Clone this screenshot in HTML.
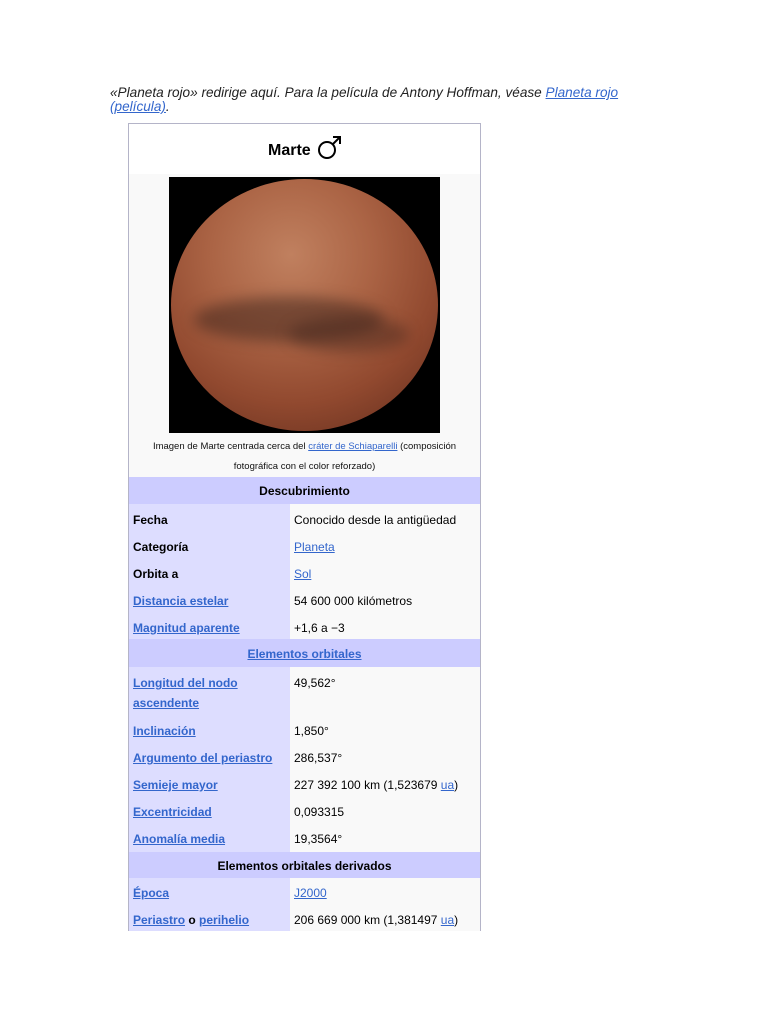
<!DOCTYPE html>
<html><head><meta charset="utf-8">
<style>
*{margin:0;padding:0;box-sizing:border-box}
body{width:768px;height:1024px;background:#fff;font-family:"Liberation Sans",Arial,sans-serif;color:#000;position:relative;overflow:hidden}
a{color:#3366cc;text-decoration:underline}
.note{position:absolute;left:110px;top:86px;width:530px;font-size:13.6px;font-style:italic;line-height:14px;color:#222}
.tbl{position:absolute;left:128px;top:123px;width:353px;height:830px;border:1px solid #b4b4c8;border-bottom:none;background:#f9f9f9}
.abs{position:absolute}
.title{left:0;top:0;width:351px;height:50px;background:#fff}
.cap{left:0;top:313px;width:351px;text-align:center;font-size:9.5px;line-height:20px;color:#111}
.hd{left:0;width:351px;background:#ccccff;text-align:center;font-weight:bold;font-size:12px}
.lc{left:0;width:161px;background:#ddddff}
.l{left:4px;font-size:12px;font-weight:bold;line-height:20px}
.r{left:165px;font-size:12px;line-height:20px}
</style></head><body>
<div class="note">«Planeta rojo» redirige aquí. Para la película de Antony Hoffman, véase <a>Planeta rojo (película)</a>.</div>
<div class="tbl">
 <div class="abs title">
  <div class="abs" style="left:139px;top:18px;font-weight:bold;font-size:16px;line-height:18px">Marte</div>
  <svg class="abs" style="left:188px;top:11px" width="26" height="26" viewBox="0 0 26 26"><circle cx="10" cy="15" r="8" fill="none" stroke="#000" stroke-width="2"/><path d="M16 9 L23 2 M16 2 H23 V9" fill="none" stroke="#000" stroke-width="2"/></svg>
 </div>
 <div class="abs" style="left:40px;top:53px;width:271px;height:256px;background:#000;overflow:hidden">
  <div style="position:absolute;left:2px;top:2px;width:267px;height:252px;border-radius:50%;background:radial-gradient(circle at 45% 30%,#c0805f 0%,#ab6445 35%,#91492f 65%,#703522 88%,#4e2418 100%)"></div>
  <div style="position:absolute;left:25px;top:120px;width:190px;height:45px;border-radius:50%;background:rgba(60,35,28,0.5);filter:blur(7px)"></div>
  <div style="position:absolute;left:120px;top:140px;width:120px;height:35px;border-radius:50%;background:rgba(60,35,28,0.4);filter:blur(7px)"></div>
 </div>
 <div class="abs cap">Imagen de Marte centrada cerca del <a>cráter de Schiaparelli</a> (composición<br>fotográfica con el color reforzado)</div>

 <div class="abs hd" style="top:353px;height:27px;line-height:29px">Descubrimiento</div>
 <div class="abs lc" style="top:380px;height:135px"></div>
 <div class="abs l" style="top:386px">Fecha</div><div class="abs r" style="top:386px">Conocido desde la antigüedad</div>
 <div class="abs l" style="top:413px">Categoría</div><div class="abs r" style="top:413px"><a>Planeta</a></div>
 <div class="abs l" style="top:440px">Orbita a</div><div class="abs r" style="top:440px"><a>Sol</a></div>
 <div class="abs l" style="top:467px"><a>Distancia estelar</a></div><div class="abs r" style="top:467px">54 600 000 kilómetros</div>
 <div class="abs l" style="top:494px"><a>Magnitud aparente</a></div><div class="abs r" style="top:494px">+1,6 a −3</div>

 <div class="abs hd" style="top:515px;height:28px;line-height:30px"><a>Elementos orbitales</a></div>
 <div class="abs lc" style="top:543px;height:185px"></div>
 <div class="abs l" style="top:549px"><a>Longitud del nodo </a><br><a>ascendente</a></div><div class="abs r" style="top:549px">49,562°</div>
 <div class="abs l" style="top:597px"><a>Inclinación</a></div><div class="abs r" style="top:597px">1,850°</div>
 <div class="abs l" style="top:624px"><a>Argumento del periastro</a></div><div class="abs r" style="top:624px">286,537°</div>
 <div class="abs l" style="top:651px"><a>Semieje mayor</a></div><div class="abs r" style="top:651px">227 392 100 km (1,523679 <a>ua</a>)</div>
 <div class="abs l" style="top:678px"><a>Excentricidad</a></div><div class="abs r" style="top:678px">0,093315</div>
 <div class="abs l" style="top:705px"><a>Anomalía media</a></div><div class="abs r" style="top:705px">19,3564°</div>

 <div class="abs hd" style="top:728px;height:26px;line-height:28px">Elementos orbitales derivados</div>
 <div class="abs lc" style="top:754px;height:53px"></div>
 <div class="abs l" style="top:759px"><a>Época</a></div><div class="abs r" style="top:759px"><a>J2000</a></div>
 <div class="abs l" style="top:786px"><a>Periastro</a> o <a>perihelio</a></div><div class="abs r" style="top:786px">206 669 000 km (1,381497 <a>ua</a>)</div>
</div>
<div class="abs" style="left:0;top:931px;width:768px;height:93px;background:#fff"></div>
</body></html>
